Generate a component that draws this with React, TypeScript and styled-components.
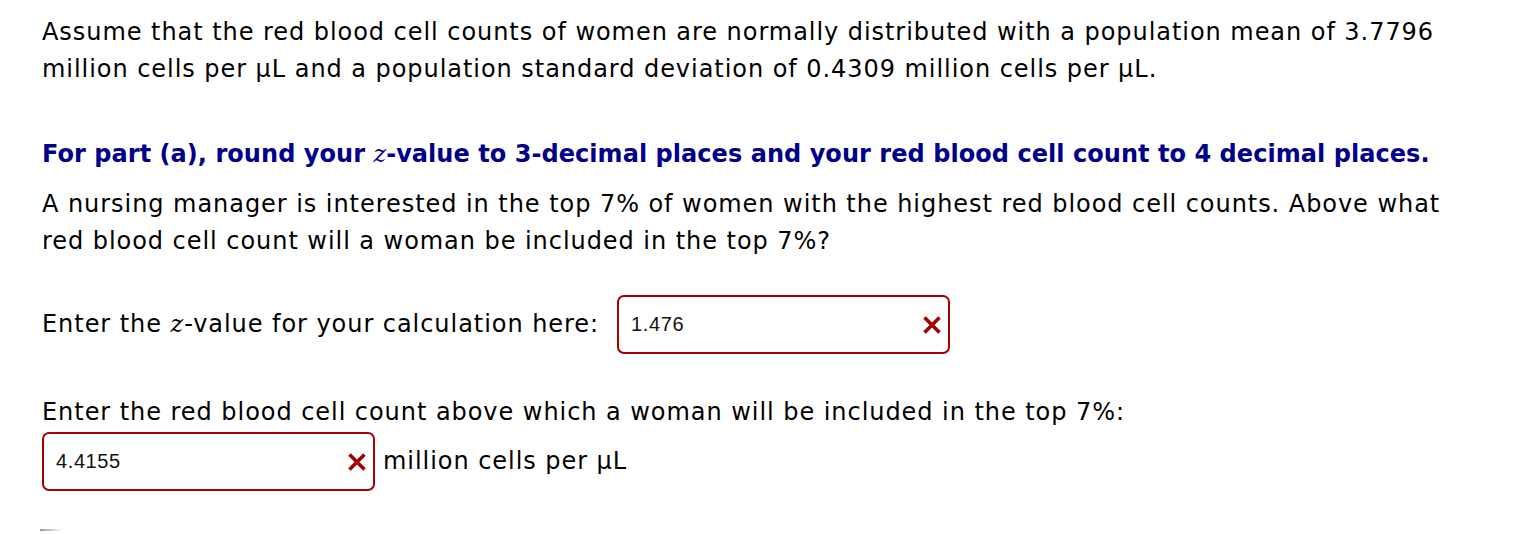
import React from "react";
import styled, { createGlobalStyle } from "styled-components";

const Global = createGlobalStyle`
  html, body { margin: 0; padding: 0; background: #fff; }
  body { font-family: "DejaVu Sans", "Open Sans", sans-serif; color: #000; }
`;

const Page = styled.div`
  padding: 14px 0 0 42px;
  display: flex;
  flex-direction: column;
  font-size: 24px;
  line-height: 37px;
  letter-spacing: 0.95px;
  white-space: nowrap;
`;

const Para = styled.p<{ $mt?: number }>`
  margin: ${(p) => p.$mt ?? 0}px 0 0 0;
`;

const Instruction = styled.p`
  margin: 48px 0 0 0;
  font-weight: 700;
  letter-spacing: 0.05px;
  color: #00008b;
`;

const Z = styled.span`
  font-family: "DejaVu Serif", "Liberation Serif", serif;
  font-style: italic;
  font-weight: 400;
`;

const Row = styled.div<{ $mt: number; $gap: number }>`
  margin-top: ${(p) => p.$mt}px;
  display: flex;
  align-items: center;
  gap: ${(p) => p.$gap}px;
`;

const Field = styled.div`
  box-sizing: border-box;
  width: 333px;
  height: 59px;
  border: 2px solid #a80000;
  border-radius: 7px;
  display: flex;
  align-items: center;
  justify-content: space-between;
  padding: 0 7px 0 12px;
  font-family: "Liberation Sans", Arial, sans-serif;
  font-size: 20px;
  letter-spacing: 0.6px;
  color: #111;
`;

const Cross = styled.svg`
  width: 18px;
  height: 18px;
`;

const Fade = styled.div`
  margin: 38px 0 0 -2px;
  width: 22px;
  height: 2px;
  background: linear-gradient(to right, #999, #fff);
`;

const XIcon = () => (
  <Cross viewBox="0 0 18 18">
    <path d="M1.5 1.5 L16.5 16.5 M16.5 1.5 L1.5 16.5" stroke="#a00000" strokeWidth="3.6" strokeLinecap="butt" />
  </Cross>
);

export default function App() {
  return (
    <>
      <Global />
      <Page>
        <Para>
          Assume that the red blood cell counts of women are normally distributed with a population mean of 3.7796
          <br />
          million cells per μL and a population standard deviation of 0.4309 million cells per μL.
        </Para>
        <Instruction>
          For part (a), round your <Z>z</Z>-value to 3-decimal places and your red blood cell count to 4 decimal places.
        </Instruction>
        <Para $mt={13}>
          A nursing manager is interested in the top 7% of women with the highest red blood cell counts. Above what
          <br />
          red blood cell count will a woman be included in the top 7%?
        </Para>
        <Row $mt={35} $gap={18}>
          <span>
            Enter the <Z>z</Z>-value for your calculation here:
          </span>
          <Field>
            <span>1.476</span>
            <XIcon />
          </Field>
        </Row>
        <Para $mt={40}>Enter the red blood cell count above which a woman will be included in the top 7%:</Para>
        <Row $mt={1} $gap={8}>
          <Field>
            <span>4.4155</span>
            <XIcon />
          </Field>
          <span>million cells per μL</span>
        </Row>
        <Fade />
      </Page>
    </>
  );
}
